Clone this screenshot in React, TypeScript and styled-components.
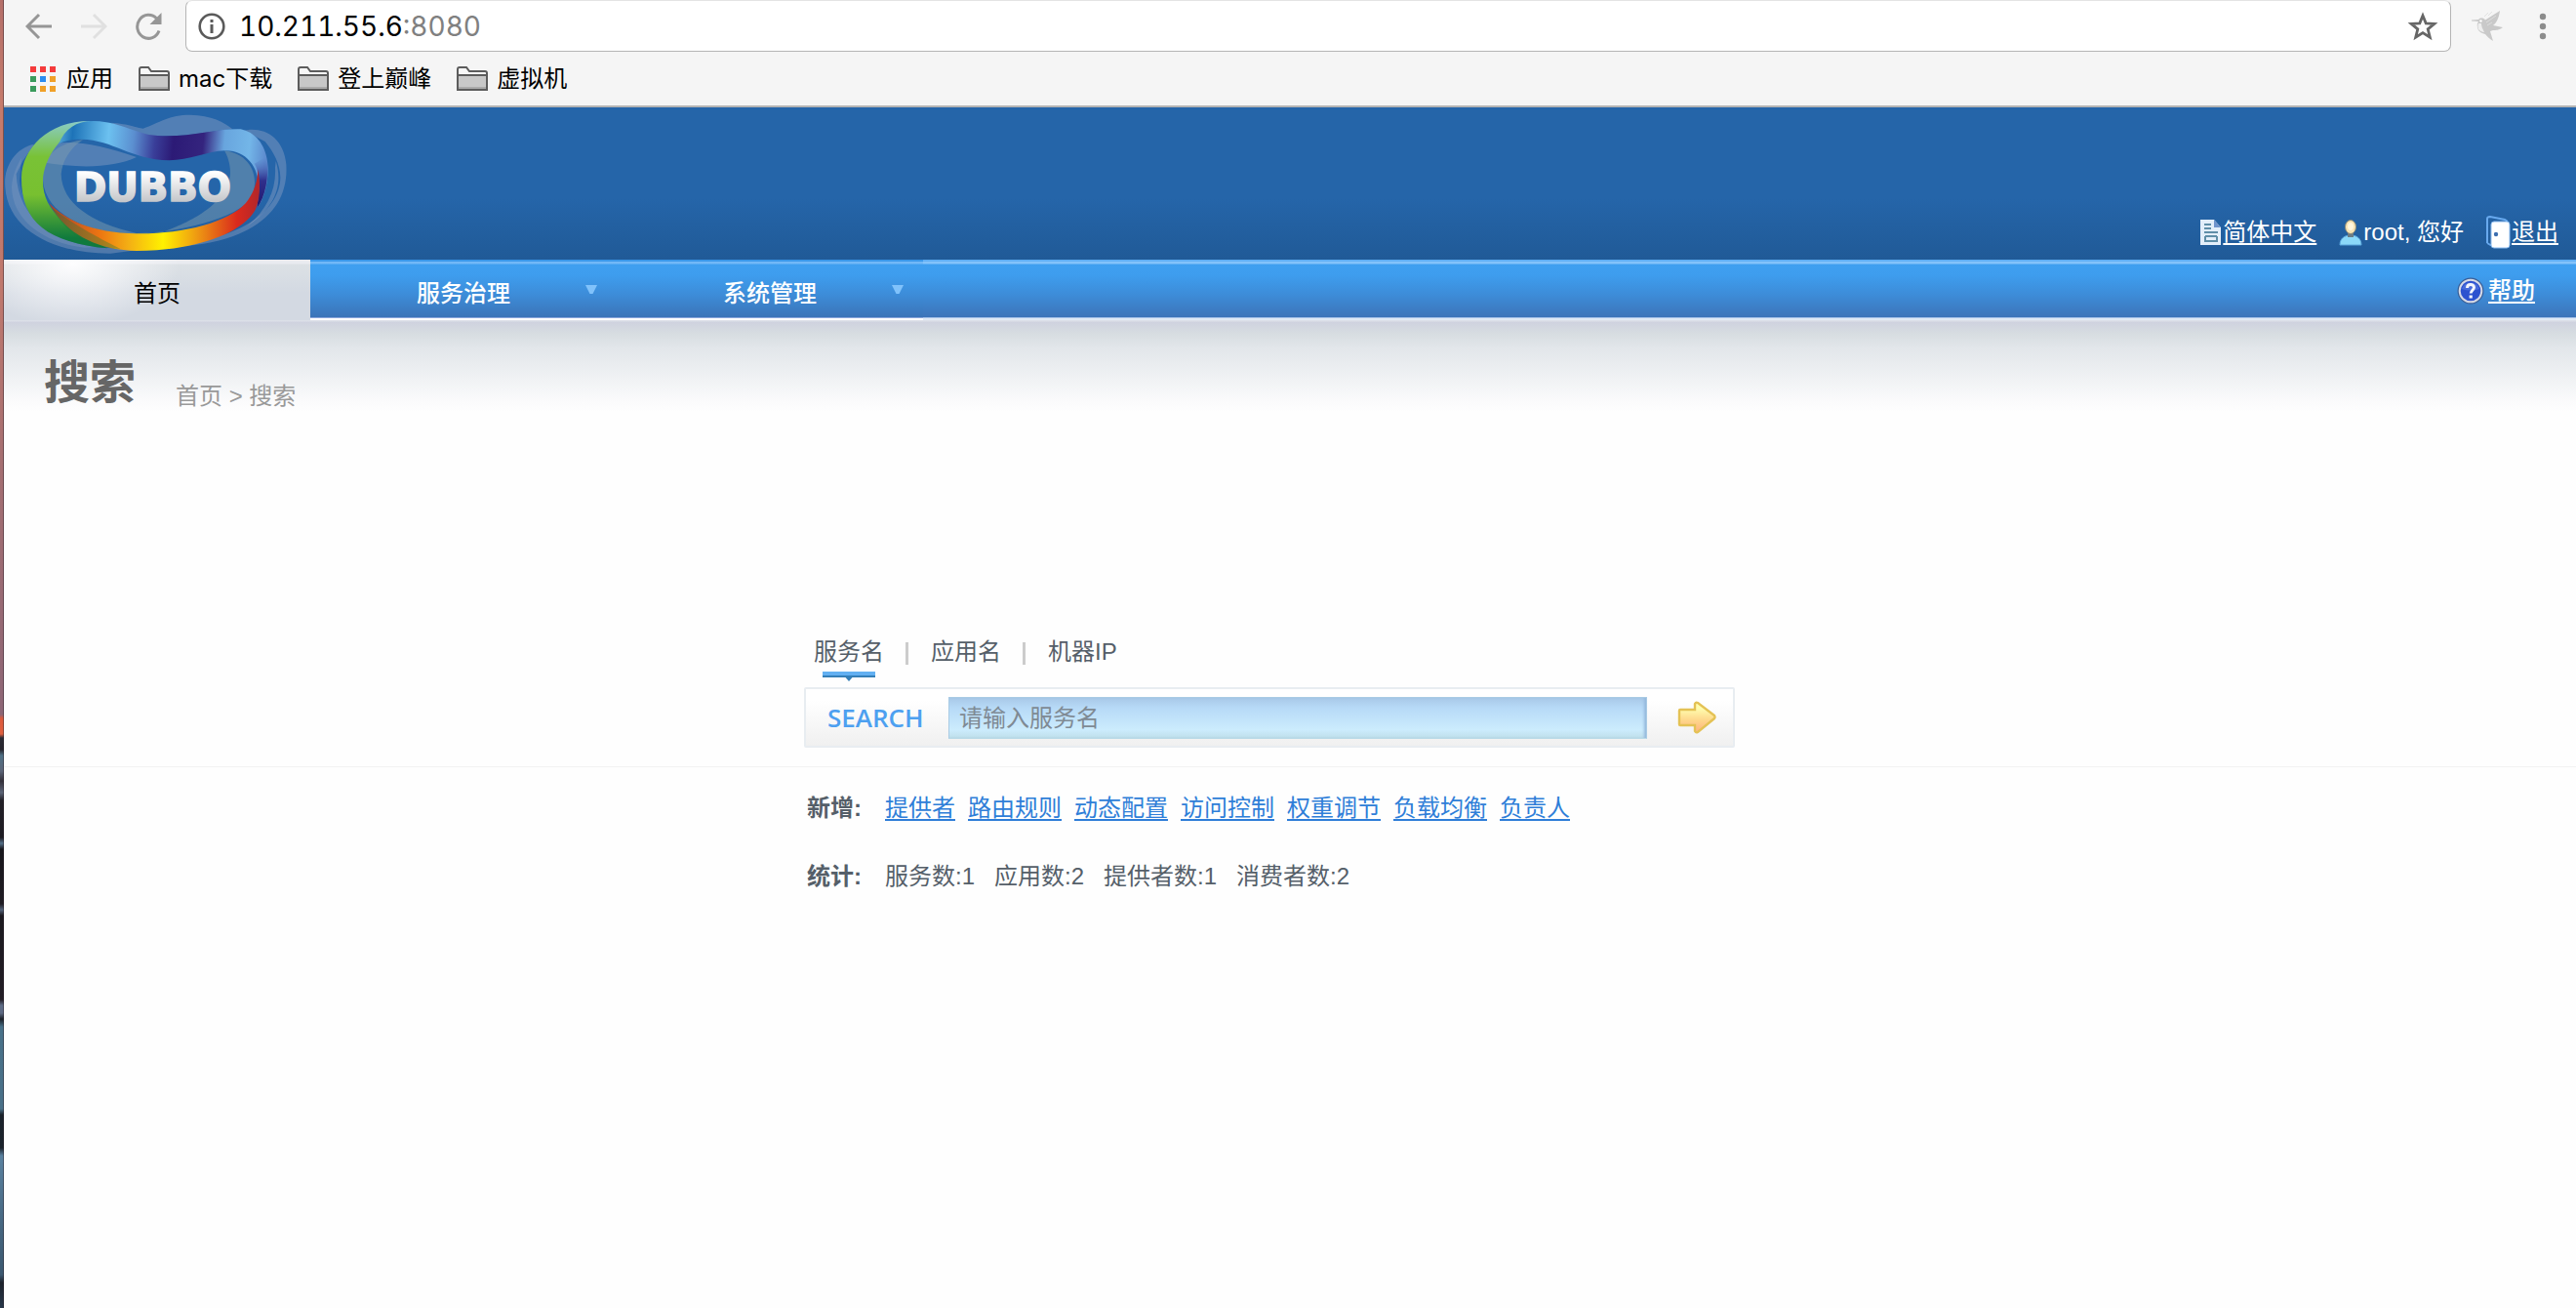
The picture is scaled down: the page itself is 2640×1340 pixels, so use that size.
import React, { useState } from "react";
import styled, { createGlobalStyle, css } from "styled-components";

const sans = `"Liberation Sans", "Noto Sans CJK SC", sans-serif`;
const ui = `Inter, "Noto Sans CJK SC", sans-serif`;

const GlobalStyle = createGlobalStyle`
  *, *::before, *::after { box-sizing: border-box; }
  body { margin: 0; background: #fefefe; font: 24px/32px ${sans}; color: #555f69; }
  button, input { font: inherit; color: inherit; }
  ul { list-style: none; margin: 0; padding: 0; }
  svg { display: block; flex: none; }
`;

const Desktop = styled.div`
  display: grid;
  grid-template-columns: 4px minmax(0, 1fr);
  min-height: 100vh;
`;

const Wallpaper = styled.div`
  border-right: 1px solid rgba(40, 30, 40, 0.45);
  background: linear-gradient(
    #b5706a 0, #c67b6b 110px, #bf786d 300px, #a56f72 480px, #8d6676 732px,
    #dd5a3c 736px, #e0603f 752px, #2a2a34 756px, #26252e 768px, #4f7186 774px,
    #5c6578 790px, #33303a 800px, #5c6578 812px, #222027 820px, #1d1b22 858px,
    #55718a 864px, #17161b 870px, #1f1c23 926px, #54647a 932px, #1b191f 938px,
    #221d25 1024px, #5f6e88 1030px, #5d6a83 1038px, #1a2028 1044px,
    #487189 1052px, #497088 1136px, #1a222b 1142px, #1b232c 1176px,
    #5a82a0 1184px, #45657f 1260px, #3b5870 1306px, #1c222c 1314px, #27384a 1340px
  );
`;

const BrowserWindow = styled.div`
  display: flex;
  flex-direction: column;
  min-width: 0;
`;

const Chrome = styled.header`
  background: #f5f5f5;
  border-bottom: 2px solid #b4b4b4;
  font-family: ${ui};
  color: #000;
`;

const Toolbar = styled.div`
  display: flex;
  align-items: center;
  height: 53px;
  padding: 0 18px 0 20px;
`;

const ToolButtons = styled.div`
  display: flex;
  gap: 24px;
  padding-right: 22px;
`;

const ToolButton = styled.button`
  display: flex;
  align-items: center;
  justify-content: center;
  width: 32px;
  height: 32px;
  padding: 0;
  border: 0;
  background: none;
`;

const Omnibox = styled.div`
  flex: 1;
  display: flex;
  align-items: center;
  gap: 14px;
  height: 53px;
  padding: 0 12px;
  background: #fff;
  border: 1px solid #b5b5b5;
  border-top-color: #e4e4e4;
  border-radius: 7px;
`;

const Address = styled.span`
  flex: 1;
  font-size: 28px;
  font-variant-numeric: tabular-nums;
  span { color: #808080; }
`;

const Extensions = styled.div`
  display: flex;
  align-items: center;
  gap: 24px;
  padding-left: 20px;
`;

const Bookmarks = styled.nav`
  display: flex;
  gap: 26px;
  height: 55px;
  padding: 4px 27px 0;
`;

const Bookmark = styled.a`
  display: flex;
  align-items: center;
  gap: 9px;
  height: 48px;
  color: #000;
  text-decoration: none;
`;

const Banner = styled.div`
  display: flex;
  justify-content: space-between;
  align-items: flex-end;
  height: 156px;
  padding: 0 18px 0 0;
  background: linear-gradient(#2565a9 60%, #205a97);
`;

const LogoLink = styled.a`
  padding-bottom: 5px;
`;

const Account = styled.div`
  display: flex;
  gap: 23px;
  padding-bottom: 11px;
  color: #fff;
`;

const IconText = styled.span<{ $gap?: number }>`
  display: flex;
  align-items: center;
  gap: ${(p) => p.$gap ?? 1}px;
`;

const underline = css`
  text-decoration: underline 2px;
  text-underline-offset: 3px;
  text-decoration-skip-ink: none;
`;

const WhiteLink = styled.a<{ $strong?: boolean }>`
  color: #fff;
  font-weight: ${(p) => (p.$strong ? 500 : 400)};
  ${underline}
`;

const NavBar = styled.nav`
  display: flex;
  justify-content: space-between;
  height: 62px;
  background: linear-gradient(
    #62b0f5 0 2px, #84c3fa 2px 4px, #3f9ff0 5px, #3e9dee 16px,
    #3d8cd8 36px, #3d74b9 59px, #a9c4ea 59px 60px, #e0e9f5 60px
  );
`;

const Tabs = styled.ul`
  display: flex;
`;

const Tab = styled.li<{ $active?: boolean }>`
  width: 314px;
  background: ${(p) =>
    p.$active
      ? `radial-gradient(ellipse 110px 64px at 70px 4px, #fdfdfe, rgba(250,250,252,0)),
         linear-gradient(#e9ebf0 0 4px, #dce1e5 5px, #d3d9e2 34px, #d3d9e2)`
      : `linear-gradient(#3b98ea 0 2px, #72b8f7 2px 4px, #3f9ff0 5px, #3e9dee 16px,
         #3d8cd8 36px, #3b74b8 59px, #8ba6dc 59px 60px, #fff 60px)`};
`;

const TabLink = styled.a<{ $active?: boolean }>`
  display: grid;
  grid-template-columns: 32px 1fr 12px;
  align-items: center;
  height: 62px;
  padding: 8px 20px 0 0;
  color: ${(p) => (p.$active ? "#000" : "#fff")};
  font-weight: ${(p) => (p.$active ? 400 : 500)};
  text-align: center;
  text-decoration: none;
  svg { margin-bottom: 8px; }
  span { grid-column: 2; }
`;

const Help = styled.div`
  display: flex;
  align-items: center;
  padding: 2px 42px 0 0;
`;

const Page = styled.main`
  flex: 1;
  background: linear-gradient(#dcdfe8 0 1px, #cfd2df 2px, #d7dde1 14px, #e2e6ea 28px, #f0f2f4 60px, #fbfbfc 84px, #fefefe 94px);
`;

const Heading = styled.div`
  display: flex;
  align-items: flex-end;
  gap: 41px;
  height: 94px;
  padding-left: 41px;
`;

const Title = styled.h1`
  margin: 0;
  padding-bottom: 2px;
  color: #666;
  font: 700 47px/56px ${sans};
`;

const Crumbs = styled.div`
  color: #999;
`;

const SearchArea = styled.section`
  padding-top: 218px;
  border-bottom: 1px solid #f2f2f2;
`;

const Column = styled.div`
  width: 996px;
  max-width: 100%;
  margin: 0 auto;
`;

const Kinds = styled.div`
  display: flex;
  gap: 22px;
  height: 64px;
  padding: 12px 10px 0;
`;

const Divider = styled.span`
  width: 3px;
  height: 23px;
  margin: 6px 1px 0 0;
  background: #ccc;
`;

const Kind = styled.button`
  display: flex;
  flex-direction: column;
  align-items: center;
  gap: 4px;
  padding: 0;
  border: 0;
  background: none;
`;

const SearchForm = styled.form`
  display: flex;
  align-items: center;
  max-width: 954px;
  height: 62px;
  margin-bottom: 19px;
  border: 2px solid #e8edf1;
  border-radius: 2px;
  background: linear-gradient(#fff 20%, #f0f0f0);
`;

const SearchLabel = styled.label`
  width: 146px;
  padding-left: 22px;
  color: #4da0f0;
  font: 600 26px/32px "Open Sans", sans-serif;
`;

const SearchInput = styled.input`
  flex: 1;
  min-width: 0;
  height: 43px;
  padding: 1px 10px 0;
  border: 1px solid #a9cbe4;
  border-bottom-color: #b9dae6;
  background: linear-gradient(#a9c9e8, #b7daf7 25%, #ccecfd 80%, #bfdfea);
  box-shadow: inset -3px 0 3px -1px #94b8dc;
  outline: 0;
  &::placeholder { color: #7f8a94; opacity: 1; }
`;

const GoButton = styled.button`
  display: flex;
  justify-content: center;
  width: 88px;
  padding: 0 0 0 14px;
  border: 0;
  background: none;
  cursor: pointer;
`;

const InfoRow = styled.div`
  display: grid;
  grid-template-columns: 80px 1fr;
  padding: 26px 0 0 3px;
  margin-bottom: 12px;
`;

const InfoItems = styled.div<{ $gap: number }>`
  display: flex;
  flex-wrap: wrap;
  gap: ${(p) => p.$gap}px;
`;

const BlueLink = styled.a`
  color: #2f7ed8;
  ${underline}
`;

const BackIcon = ({ color, flip }: { color: string; flip?: boolean }) => (
  <svg width="28" height="28" viewBox="0 0 28 28" fill="none" stroke={color} strokeWidth="3">
    <path d={flip ? "M1 14H25M14 2L26 14L14 26" : "M27 14H3M14 2L2 14L14 26"} />
  </svg>
);

const ReloadIcon = () => (
  <svg width="28" height="28" viewBox="0 0 28 28">
    <path d="M25 18.5A11.5 12 0 1 1 22.5 6" fill="none" stroke="#969696" strokeWidth="3" />
    <path d="M27.5 0V12H15.5Z" fill="#969696" />
  </svg>
);

const InfoIcon = () => (
  <svg width="28" height="28" viewBox="0 0 28 28">
    <circle cx="14" cy="14" r="12.3" fill="none" stroke="#5a5a5a" strokeWidth="2.6" />
    <path d="M12.5 7H15.5V10H12.5ZM12.5 12H15.5V21H12.5Z" fill="#5a5a5a" />
  </svg>
);

const StarIcon = () => (
  <svg width="32" height="32" viewBox="0 0 32 32">
    <path d="M16 5L19.2 12.8L27.8 13.4L21.2 18.8L23.3 27.2L16 22.6L8.7 27.2L10.8 18.8L4.2 13.4L12.8 12.8Z" fill="none" stroke="#666" strokeWidth="2.8" />
  </svg>
);

const BirdIcon = () => (
  <svg width="34" height="32" viewBox="0 0 34 32">
    <path d="M1 9.5L8 9C10 7 13 7 15 9.500L30 0C29 8 26 13 23 15L33 17C29 20 26 20 23 20L20 21L23 31C19 29 17 26 15 24C9 23 6 19 7 13L8 11L1 10.500Z" fill="#c9c9c9" />
    <path d="M8 13C6 19 10 22 14 22C12 18 11 16 11 13Z" fill="#eee" />
    <path d="M16 12L26 5M17 15L22 12" stroke="#ddd" strokeWidth="1" />
    <path d="M14 6L18 2M18 5L22 1" stroke="#e2e2e2" strokeWidth="1" />
    <circle cx="10.500" cy="10.500" r="1.200" fill="#fff" />
  </svg>
);

const MenuIcon = () => (
  <svg width="28" height="28" viewBox="0 0 28 28" fill="#8c8c8c">
    <circle cx="14" cy="4" r="3.200" />
    <circle cx="14" cy="14" r="3.200" />
    <circle cx="14" cy="24" r="3.200" />
  </svg>
);

const APP_COLORS = ["#f43b3b", "#f43b3b", "#f43b3b", "#3a9b5c", "#2b8cf0", "#f0a028", "#3a9b5c", "#f0a028", "#f0a028"];

const AppsIcon = () => (
  <svg width="28" height="26" viewBox="0 0 28 26">
    {APP_COLORS.map((c, i) => (
      <rect key={i} x={(i % 3) * 10} y={Math.floor(i / 3) * 10} width="6" height="6" fill={c} />
    ))}
  </svg>
);

const FolderIcon = () => (
  <svg width="32" height="26" viewBox="0 0 32 26">
    <path d="M1 24V3Q1 1 3 1H10L13 5H29Q31 5 31 7V24Z" fill="#f7f7f7" stroke="#5c5c5c" strokeWidth="2" />
    <path d="M2 9H30V23H2Z" fill="#c8c8c8" />
    <path d="M1 9H31" stroke="#5c5c5c" strokeWidth="2" />
    <path d="M2 22H30" stroke="#aaa" strokeWidth="2" />
  </svg>
);

const DubboLogo = () => (
  <svg width="292" height="146" viewBox="12 30 876 438" role="img" aria-label="DUBBO">
    <defs>
      <linearGradient id="green" x1="0" y1="57" x2="0" y2="448" gradientUnits="userSpaceOnUse">
        <stop offset="0" stopColor="#8accc8" />
        <stop offset=".28" stopColor="#79c236" />
        <stop offset=".58" stopColor="#78c030" />
        <stop offset=".92" stopColor="#0f7a3d" />
      </linearGradient>
      <linearGradient id="sky" x1="180" y1="0" x2="826" y2="60" gradientUnits="userSpaceOnUse">
        <stop offset="0" stopColor="#5fb0dc" />
        <stop offset=".08" stopColor="#1d73b8" />
        <stop offset=".25" stopColor="#6cc1f0" />
        <stop offset=".37" stopColor="#5b8fd0" />
        <stop offset=".47" stopColor="#3a3f9a" />
        <stop offset=".56" stopColor="#2c1a76" />
        <stop offset=".7" stopColor="#34247e" />
        <stop offset=".8" stopColor="#68a5de" />
        <stop offset=".92" stopColor="#73b6e8" />
        <stop offset="1" stopColor="#5d8ccf" />
      </linearGradient>
      <linearGradient id="tail" x1="0" y1="170" x2="0" y2="310" gradientUnits="userSpaceOnUse">
        <stop offset="0" stopColor="#4a68b8" stopOpacity="0" />
        <stop offset=".5" stopColor="#2f2f8c" />
        <stop offset="1" stopColor="#241a72" />
      </linearGradient>
      <linearGradient id="fire" x1="150" y1="0" x2="800" y2="0" gradientUnits="userSpaceOnUse">
        <stop offset="0" stopColor="#a63f2c" />
        <stop offset=".24" stopColor="#ec7512" />
        <stop offset=".38" stopColor="#f4b014" />
        <stop offset=".54" stopColor="#fff100" />
        <stop offset=".7" stopColor="#ee9a12" />
        <stop offset=".89" stopColor="#da2a1c" />
        <stop offset="1" stopColor="#b0262c" />
      </linearGradient>
      <linearGradient id="silver" x1="0" y1="215" x2="0" y2="305" gradientUnits="userSpaceOnUse">
        <stop offset="0" stopColor="#fff" />
        <stop offset="1" stopColor="#c4c6ca" />
      </linearGradient>
    </defs>
    <g fill="#a9b4cc" fillOpacity=".34">
      <path d="M105 128C45 140 10 200 16 260C25 400 180 465 340 464L430 452L300 445C170 430 55 360 50 220L70 180Z" />
      <path d="M66 170C54 190 38 220 36 260C38 360 130 430 260 446L300 444C140 410 66 320 60 240Z" fillOpacity=".2" />
      <path d="M140 130C220 112 310 130 420 168C350 200 250 204 130 184Z" />
      <path d="M340 62C400 66 420 78 440 80C490 62 520 38 585 38C650 40 690 60 715 82C640 88 580 108 470 102C420 96 380 80 340 62Z" />
      <path d="M750 86C810 74 872 105 880 190C888 310 810 410 600 438L480 450L640 418C780 390 862 310 862 230C862 190 840 150 815 120Z" />
      <path d="M848 180C870 250 850 320 760 380C820 330 850 270 846 200Z" />
    </g>
    <path d="M255 115C140 130 130 200 132 240C140 340 260 400 400 403C500 405 700 370 770 300C800 240 780 160 690 148C700 165 708 190 708 215C705 330 520 390 500 398L420 402C280 370 190 310 188 220C192 180 215 140 255 115Z" fill="#7b9bb0" fillOpacity=".5" />
    <path d="M280 57C150 55 68 140 66 230C64 370 150 430 330 448C220 390 130 340 132 240C134 170 190 90 280 57Z" fill="url(#green)" />
    <path d="M180 128C200 80 235 56 290 57C380 60 420 102 500 103C600 105 660 80 740 82C800 95 822 150 824 200C825 250 810 300 790 325L795 250C790 190 750 145 690 148C640 150 580 178 520 178C400 175 350 115 250 113C220 113 195 118 180 128Z" fill="url(#sky)" />
    <path d="M821 165C828 230 816 290 790 325L797 260C795 215 790 200 782 188Z" fill="url(#tail)" />
    <path d="M150 308C200 360 280 400 420 403C560 405 700 370 755 310C780 280 793 240 793 205C800 240 802 290 785 330C740 410 580 456 420 456C290 452 200 400 150 308Z" fill="url(#fire)" />
    <path d="M160 325C210 362 270 400 370 450C250 446 190 380 160 325Z" fill="#1a7a3a" fillOpacity=".35" />
    <text x="228" y="304" fontFamily="DejaVu Sans, sans-serif" fontWeight="700" fontSize="120" fill="url(#silver)" stroke="url(#silver)" strokeWidth="5">DUBBO</text>
  </svg>
);

const DocIcon = () => (
  <svg width="22" height="28" viewBox="0 0 22 28">
    <path d="M0 1H14L21 9V27H0Z" fill="#e3eefa" />
    <path d="M14 1L21 9H14Z" fill="#6f93cc" />
    <path d="M4 6H11M4 10H11M4 14H18M4 23H18M5 18H17" stroke="#5f8ea8" strokeWidth="2" />
    <path d="M5 18V22M17 18V22" stroke="#5f8ea8" strokeWidth="2" />
  </svg>
);

const UserIcon = () => (
  <svg width="24" height="28" viewBox="0 0 24 28">
    <path d="M1 27C1 20 6 17 12 17C18 17 23 20 23 27Z" fill="#8bd8f8" stroke="#5aa6dc" />
    <path d="M9 14H15V19H9Z" fill="#6a7c86" />
    <ellipse cx="12" cy="8.500" rx="5.500" ry="7" fill="#f7e4b4" stroke="#8a8878" />
    <ellipse cx="12" cy="8" rx="3" ry="4" fill="#fff6dc" />
  </svg>
);

const DoorIcon = () => (
  <svg width="25" height="34" viewBox="0 0 25 34">
    <path d="M1 28V3Q1 1 4 1L19 4L22 6" fill="none" stroke="#68a9ee" strokeWidth="2" />
    <path d="M1 28L6 31" stroke="#68a9ee" strokeWidth="2" />
    <rect x="5" y="6" width="19" height="27" rx="3" fill="#fff" stroke="#8cbcf0" />
    <circle cx="10" cy="19" r="2.200" fill="#3d6fb0" />
  </svg>
);

const HelpIcon = () => (
  <svg width="28" height="28" viewBox="0 0 28 28" aria-hidden="true">
    <circle cx="14" cy="14" r="12.500" fill="#2a55cc" stroke="#3a5f98" strokeWidth="2" />
    <circle cx="14" cy="14" r="11.300" fill="#2c52cf" stroke="#d5dae6" strokeWidth="2" />
    <path d="M5 12A9.500 9.500 0 0 1 23 12Q14 15 5 12Z" fill="#5b7fe2" fillOpacity=".6" />
    <path d="M10.500 11C10.500 6.500 17.500 6.500 17.500 10.500C17.500 13 14.200 13.500 14.200 16.500" fill="none" stroke="#f2f5fc" strokeWidth="3" />
    <rect x="12.600" y="18.500" width="3.200" height="3" fill="#f2f5fc" />
  </svg>
);

const CaretIcon = () => (
  <svg width="12" height="10" viewBox="0 0 12 10">
    <path d="M0 0H12L7.500 9H4.500Z" fill="#80c2fb" />
  </svg>
);

const MarkerIcon = () => (
  <svg width="54" height="10" viewBox="0 0 54 10">
    <rect width="54" height="4" fill="#62b0f2" />
    <path d="M0 4H54V6H30.500L27 10L23.500 6H0Z" fill="#3580b8" />
  </svg>
);

const ArrowIcon = () => (
  <svg width="40" height="34" viewBox="0 0 40 34">
    <defs>
      <linearGradient id="gold" x1="0" y1="0" x2="0" y2="1">
        <stop offset=".2" stopColor="#fffcae" />
        <stop offset=".6" stopColor="#fed68a" />
        <stop offset=".9" stopColor="#ffba82" />
      </linearGradient>
    </defs>
    <path d="M2 10Q2 9 3 9H18V3Q19 1 21 2L38 15Q39 17 38 18L21 32Q19 33 18 31V25H3Q2 25 2 24Z" fill="url(#gold)" stroke="#e4c255" strokeWidth="2.400" />
  </svg>
);

const BOOKMARKS = ["mac下载", "登上巅峰", "虚拟机"];
const KINDS = ["服务名", "应用名", "机器IP"];
const CREATE_LINKS = ["提供者", "路由规则", "动态配置", "访问控制", "权重调节", "负载均衡", "负责人"];
const STATS = ["服务数:1", "应用数:2", "提供者数:1", "消费者数:2"];

export default function App() {
  const [kind, setKind] = useState(0);
  return (
    <>
      <GlobalStyle />
      <Desktop>
        <Wallpaper />
        <BrowserWindow>
          <Chrome>
            <Toolbar>
              <ToolButtons>
                <ToolButton aria-label="后退"><BackIcon color="#969696" /></ToolButton>
                <ToolButton aria-label="前进"><BackIcon color="#e0e0e0" flip /></ToolButton>
                <ToolButton aria-label="重新加载"><ReloadIcon /></ToolButton>
              </ToolButtons>
              <Omnibox>
                <InfoIcon />
                <Address>10.211.55.6<span>:8080</span></Address>
                <StarIcon />
              </Omnibox>
              <Extensions>
                <BirdIcon />
                <ToolButton aria-label="菜单"><MenuIcon /></ToolButton>
              </Extensions>
            </Toolbar>
            <Bookmarks>
              <Bookmark href="#"><AppsIcon />应用</Bookmark>
              {BOOKMARKS.map((b) => (
                <Bookmark href="#" key={b}><FolderIcon />{b}</Bookmark>
              ))}
            </Bookmarks>
          </Chrome>

          <Banner>
            <LogoLink href="#"><DubboLogo /></LogoLink>
            <Account>
              <IconText><DocIcon /><WhiteLink href="#">简体中文</WhiteLink></IconText>
              <IconText><UserIcon />root, 您好</IconText>
              <IconText><DoorIcon /><WhiteLink href="#">退出</WhiteLink></IconText>
            </Account>
          </Banner>

          <NavBar>
            <Tabs>
              <Tab $active><TabLink $active href="#"><span>首页</span></TabLink></Tab>
              {["服务治理", "系统管理"].map((t) => (
                <Tab key={t}><TabLink href="#"><span>{t}</span><CaretIcon /></TabLink></Tab>
              ))}
            </Tabs>
            <Help>
              <IconText $gap={4}><HelpIcon /><WhiteLink $strong href="#">帮助</WhiteLink></IconText>
            </Help>
          </NavBar>

          <Page>
            <Heading>
              <Title>搜索</Title>
              <Crumbs>首页 &gt; 搜索</Crumbs>
            </Heading>
            <SearchArea>
              <Column>
                <Kinds>
                  {KINDS.map((k, i) => (
                    <React.Fragment key={k}>
                      {i > 0 && <Divider />}
                      <Kind type="button" onClick={() => setKind(i)}>
                        {k}
                        {kind === i && <MarkerIcon />}
                      </Kind>
                    </React.Fragment>
                  ))}
                </Kinds>
                <SearchForm onSubmit={(e) => e.preventDefault()}>
                  <SearchLabel htmlFor="keyword">SEARCH</SearchLabel>
                  <SearchInput id="keyword" placeholder={`请输入${KINDS[kind]}`} />
                  <GoButton aria-label="搜索"><ArrowIcon /></GoButton>
                </SearchForm>
              </Column>
            </SearchArea>
            <Column>
              <InfoRow>
                <strong>新增:</strong>
                <InfoItems $gap={13}>
                  {CREATE_LINKS.map((l) => <BlueLink href="#" key={l}>{l}</BlueLink>)}
                </InfoItems>
              </InfoRow>
              <InfoRow>
                <strong>统计:</strong>
                <InfoItems $gap={20}>
                  {STATS.map((s) => <span key={s}>{s}</span>)}
                </InfoItems>
              </InfoRow>
            </Column>
          </Page>
        </BrowserWindow>
      </Desktop>
    </>
  );
}
